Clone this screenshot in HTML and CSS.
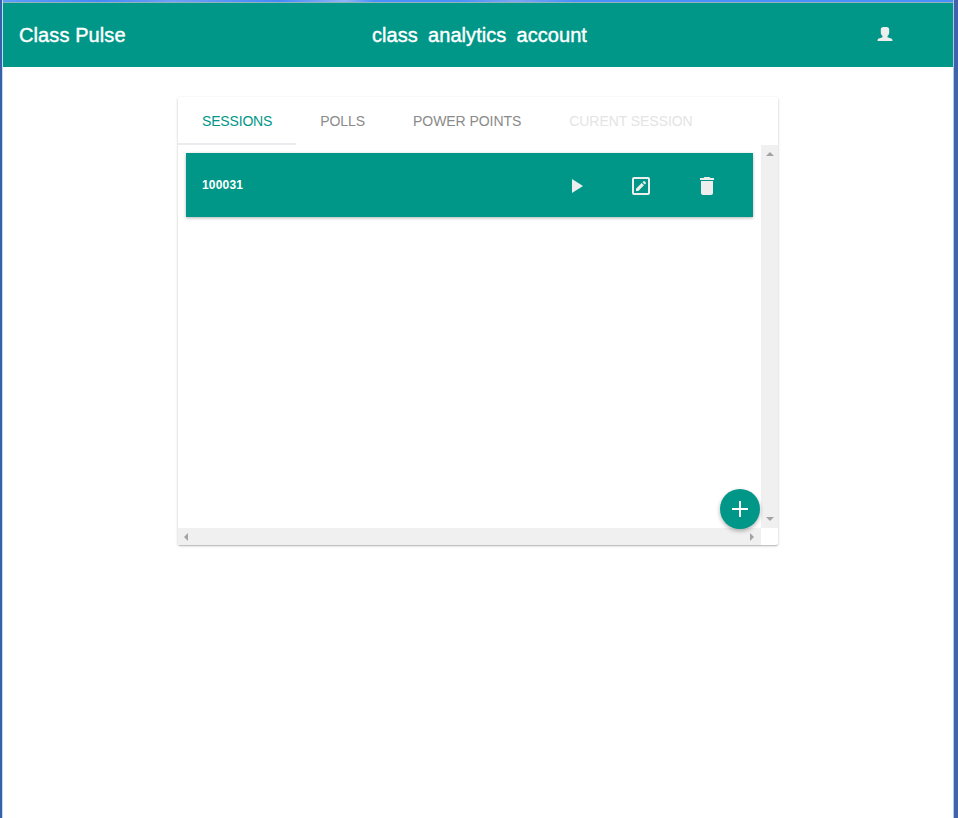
FILE: index.html
```html
<!DOCTYPE html>
<html lang="en">
<head>
    <meta charset="UTF-8">
    <meta name="viewport" content="width=device-width, initial-scale=1.0">
    <title>Class Pulse</title>
    <link rel="stylesheet" href="styles.css">
</head>
<body>
    <div class="window">
        <header class="toolbar">
            <h1 class="brand">Class Pulse</h1>
            <h2 class="account">class&nbsp; analytics&nbsp; account</h2>
            <button class="user-btn" aria-label="Account">
                <svg width="16" height="14" viewBox="0 0 16 14">
                    <path d="M6.500 0h3C11.300 0 12.200.9 12.200 2.600v2.600c0 1.700-.6 2.900-1.700 3.900v1.100l3.600 1.400c1 .4 1.400.9 1.400 2.400H.5c0-1.500.4-2 1.400-2.400l3.600-1.400V9.100C4.400 8.100 3.800 6.900 3.800 5.200V2.600C3.800.9 4.700 0 6.500 0z"/>
                </svg>
            </button>
        </header>

        <main class="card">
            <nav class="tabs">
                <button class="tab active">Sessions</button>
                <button class="tab">Polls</button>
                <button class="tab">Power Points</button>
                <button class="tab" disabled>Curent Session</button>
            </nav>

            <div class="panel">
                <div class="content">
                    <div class="session">
                        <span class="session-id">100031</span>
                        <div class="actions">
                            <button class="icon-btn" aria-label="Play">
                                <svg width="24" height="24" viewBox="0 0 24 24"><path d="M8 5v14l11-7z"/></svg>
                            </button>
                            <button class="icon-btn" aria-label="Edit">
                                <svg width="24" height="24" viewBox="0 0 24 24">
                                    <path fill-rule="evenodd" d="M5 3h14a2 2 0 0 1 2 2v14a2 2 0 0 1-2 2H5a2 2 0 0 1-2-2V5a2 2 0 0 1 2-2zm0 2v14h14V5z"/>
                                    <path d="M7 14.700V17h2.300l5.700-5.700L12.700 9zM16.800 9.500a.8.800 0 0 0 0-1.100l-1.200-1.200a.8.800 0 0 0-1.100 0l-1 1 2.300 2.300z"/>
                                </svg>
                            </button>
                            <button class="icon-btn" aria-label="Delete">
                                <svg width="24" height="24" viewBox="0 0 24 24"><path d="M6 19c0 1.100.900 2 2 2h8c1.100 0 2-.900 2-2V7H6v12zM19 4h-3.500l-1-1h-5l-1 1H5v2h14V4z"/></svg>
                            </button>
                        </div>
                    </div>
                    <button class="fab" aria-label="Add session">
                        <svg width="24" height="24" viewBox="0 0 24 24"><path d="M20 13h-7v7h-2v-7H4v-2h7V4h2v7h7z"/></svg>
                    </button>
                </div>
                <div class="scrollbar vertical">
                    <span class="arrow up"></span>
                    <span class="arrow down"></span>
                </div>
                <div class="scrollbar horizontal">
                    <span class="arrow left"></span>
                    <span class="arrow right"></span>
                </div>
            </div>
        </main>
    </div>
</body>
</html>
```
FILE: styles.css
```css
:root {
    --primary: #009788;
    --icon: #eeeeee;
    --track: #f0f0f0;
    --arrow: #a3a3a3;
}

* {
    box-sizing: border-box;
    margin: 0;
    padding: 0;
}

body {
    font-family: "Liberation Sans", Arial, sans-serif;
    background: #fff;
    height: 100vh;
    overflow: hidden;
}

button {
    background: none;
    border: none;
    font: inherit;
    cursor: pointer;
}

svg {
    display: block;
    fill: currentColor;
}

/* browser window frame */
.window {
    height: 100vh;
    border-style: solid;
    border-width: 0 4px 0 2px;
    border-color: #3f62a8 #3f62a8 #3f62a8 #3562a8;
    box-shadow: inset 1px 0 #c3dcf2, inset -1px 0 #a9c9ee;
    padding: 0 1px;
}

.window::before {
    content: "";
    display: block;
    height: 2px;
    background: linear-gradient(90deg, #5f9df8 0%, #4488f8 10%, #6f9ff5 18%, #4488f8 29%, #92b4f6 36%, #4a90fa 39%, #4a90fa 48%, #7ba5f2 54%, #4a90fa 60%);
}

.toolbar {
    display: grid;
    grid-template-columns: 1fr auto 1fr;
    align-items: center;
    height: 65px;
    padding: 0 12px 0 16px;
    border-top: 1px solid #8fb5b8;
    background: var(--primary);
    color: #fff;
}

.brand,
.account {
    font-size: 20px;
    font-weight: 400;
    line-height: 24px;
    letter-spacing: 0.1px;
    -webkit-text-stroke: 0.4px #fff;
}

.account {
    margin-right: 1px;
    letter-spacing: 0.05px;
    word-spacing: -0.5px;
}

.user-btn {
    justify-self: end;
    margin: 0 48px 2px 0;
    color: var(--icon);
}

.card {
    width: 600px;
    height: 448px;
    margin: 30px 0 0 175px;
    border-radius: 2px;
    background: #fff;
    box-shadow: 0 1px 3px rgba(0, 0, 0, 0.2), 0 1px 1px rgba(0, 0, 0, 0.14);
}

.tabs {
    display: flex;
    height: 48px;
}

.tab {
    padding: 2px 24px 0;
    border-bottom: 2px solid transparent;
    font-size: 14px;
    letter-spacing: -0.06px;
    text-transform: uppercase;
    color: #8a8a8a;
}

.tab.active {
    letter-spacing: -0.17px;
    color: var(--primary);
    border-bottom-color: #eaecf0;
}

.tab:disabled {
    color: #e4e4e4;
}

.panel {
    display: grid;
    grid-template: 383px 17px / 583px 17px;
}

.content {
    position: relative;
    padding: 8px;
}

.session {
    display: flex;
    align-items: center;
    justify-content: space-between;
    height: 64px;
    padding: 0 34px 0 16px;
    background: var(--primary);
    color: #fff;
    box-shadow: 0 1px 3px rgba(0, 0, 0, 0.3);
}

.session-id {
    font-size: 12px;
    font-weight: 700;
    letter-spacing: 0.2px;
}

.actions {
    display: flex;
    gap: 41px;
    padding-top: 2px;
}

.icon-btn {
    color: var(--icon);
}

.icon-btn:last-child {
    margin-left: 1px;
}

.fab {
    position: absolute;
    right: 1px;
    bottom: -1px;
    display: grid;
    place-items: center;
    width: 40px;
    height: 40px;
    border-radius: 50%;
    background: var(--primary);
    color: #fff;
    box-shadow: 0 2px 4px rgba(0, 0, 0, 0.3);
    z-index: 1;
}

.scrollbar {
    display: flex;
    align-items: center;
    justify-content: space-between;
    background: var(--track);
}

.scrollbar.vertical {
    flex-direction: column;
    padding: 7px 0;
}

.scrollbar.horizontal {
    padding: 0 7px 0 6px;
}

.arrow {
    border: 4px solid transparent;
}

.arrow.up {
    border-top: 0;
    border-bottom-color: var(--arrow);
}

.arrow.down {
    border-bottom: 0;
    border-top-color: var(--arrow);
}

.arrow.left {
    border-left: 0;
    border-right-color: var(--arrow);
}

.arrow.right {
    border-right: 0;
    border-left-color: var(--arrow);
}
```
